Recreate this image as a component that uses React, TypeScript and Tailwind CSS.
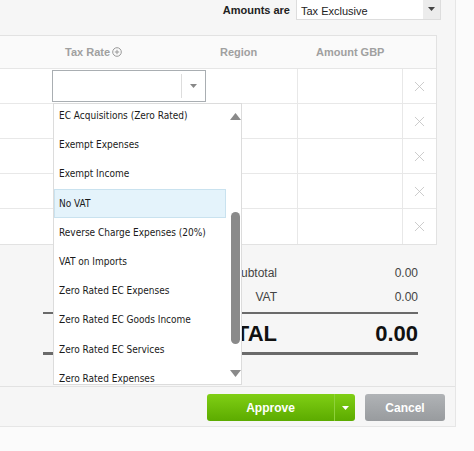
import { X } from 'lucide-react';

const items = [
  'EC Acquisitions (Zero Rated)',
  'Exempt Expenses',
  'Exempt Income',
  'No VAT',
  'Reverse Charge Expenses (20%)',
  'VAT on Imports',
  'Zero Rated EC Expenses',
  'Zero Rated EC Goods Income',
  'Zero Rated EC Services',
  'Zero Rated Expenses',
];

function Caret({ className }: { className?: string }) {
  return (
    <svg width="7" height="4" viewBox="0 0 7 4" className={className}>
      <path d="M0 0h7L3.5 4z" fill="currentColor" />
    </svg>
  );
}

export default function App() {
  return (
    <div className="relative w-[474px] h-[451px] overflow-hidden bg-[#fbfbfb] font-['Liberation_Sans',Arial,sans-serif] text-[#333]">
      <div className="w-[456px] h-[427px] bg-[#f6f6f6] border-r border-b border-[#e6e6e6] flex flex-col">
        {/* Top: amounts are */}
        <div className="h-[35px] flex justify-end items-start pr-[14px]">
          <span className="text-[11px] font-bold text-[#222] mt-[2px] mr-[6px]">Amounts are</span>
          <div className="w-[145px] h-[22px] -mt-[2px] bg-white border border-[#ddd] flex">
            <span className="flex-1 text-[11px] pl-[4px] pt-[4px] text-[#222]">Tax Exclusive</span>
            <div className="w-[17px] bg-[#ececec] flex items-center justify-center text-[#444]">
              <Caret />
            </div>
          </div>
        </div>

        {/* Table */}
        <div className="w-[437px] bg-white border border-l-0 border-[#e2e2e2]">
          <div className="h-[33px] bg-[#fafafa] flex items-center text-[11px] font-bold text-[#a0a0a0] border-b border-[#e6e6e6]">
            <div className="w-[52px]" />
            <div className="w-[154px] pl-[13px] flex items-center gap-[2px]">
              Tax Rate
              <svg width="10" height="10" viewBox="0 0 10 10" className="text-[#999]">
                <circle cx="5" cy="5" r="4.3" fill="none" stroke="currentColor" strokeWidth="1" />
                <path d="M5 2.8v4.4M2.8 5h4.4" stroke="currentColor" strokeWidth="1" />
              </svg>
            </div>
            <div className="w-[91px] pl-[14px]">Region</div>
            <div className="w-[105px] pl-[19px]">Amount GBP</div>
          </div>
          {[0, 1, 2, 3, 4].map((r) => (
            <div key={r} className={`h-[35px] flex ${r < 4 ? 'border-b border-[#e8e8e8]' : ''}`}>
              <div className="w-[52px]" />
              <div className="w-[154px] py-[1px]">
                {r === 0 && (
                  <div className="h-full border border-[#a9aeb2] flex">
                    <div className="flex-1" />
                    <div className="w-[24px] my-[3px] border-l border-[#ddd] flex items-center justify-center text-[#888]">
                      <Caret />
                    </div>
                  </div>
                )}
              </div>
              <div className="w-[91px]" />
              <div className="w-[105px] border-l border-[#e8e8e8]" />
              <div className="w-[34px] border-l border-[#e8e8e8] flex items-center justify-center text-[#bdbdbd]">
                <X size={17} strokeWidth={1.1} />
              </div>
            </div>
          ))}
        </div>

        {/* Totals */}
        <div className="h-[141px] pl-[43px] pt-[16px] text-[12px]">
          <div className="w-[375px] flex flex-col">
            <div className="flex h-[24px] items-center">
              <span className="w-[234px] text-right text-[#444]">Subtotal</span>
              <span className="flex-1 text-right text-[#444]">0.00</span>
            </div>
            <div className="flex h-[24px] items-center">
              <span className="w-[234px] text-right text-[#444]">VAT</span>
              <span className="flex-1 text-right text-[#444]">0.00</span>
            </div>
            <div className="h-[2px] bg-[#6a6a6a] mt-[3px]" />
            <div className="flex h-[38px] items-center text-[22px] font-bold text-[#111]">
              <span className="w-[234px] text-right">TOTAL</span>
              <span className="flex-1 text-right">0.00</span>
            </div>
            <div className="h-[3px] bg-[#6a6a6a]" />
          </div>
        </div>

        {/* Footer */}
        <div className="flex-1 border-t border-[#e2e2e2] flex justify-end items-start pt-[7px] pr-[10px] gap-[10px]">
          <div className="w-[148px] h-[27px] rounded-[3px] bg-gradient-to-b from-[#80cf14] to-[#5cab00] flex text-white text-[12px] font-bold">
            <span className="flex-1 flex items-center justify-center">Approve</span>
            <span className="w-[21px] border-l border-[#8ed13a] flex items-center justify-center">
              <Caret />
            </span>
          </div>
          <div className="w-[80px] h-[27px] rounded-[3px] bg-gradient-to-b from-[#b0b3b6] to-[#989b9e] flex items-center justify-center text-white text-[12px] font-bold">
            Cancel
          </div>
        </div>
      </div>

      {/* Tax rate dropdown list */}
      <div className="absolute left-[53px] top-[103px] w-[189px] h-[282px] bg-white border border-[#dcdcdc] overflow-hidden flex">
        <div className="w-[172px] -mt-[3px]">
          {items.map((it) => (
            <div
              key={it}
              className={`h-[29.2px] flex items-center pl-[4px] text-[10px] font-['DejaVu_Sans_Condensed','Liberation_Sans',sans-serif] text-[#1a1a1a] ${it === 'No VAT' ? 'bg-[#e4f3fb] border border-[#c9e2ef]' : 'border border-transparent'}`}
            >
              {it}
            </div>
          ))}
        </div>
        <div className="flex-1 relative">
          <svg width="11" height="7" viewBox="0 0 11 7" className="absolute left-[4px] top-[9px] text-[#8a8a8a]">
            <path d="M0 7L5.5 0L11 7z" fill="currentColor" />
          </svg>
          <div className="absolute left-[5px] top-[108px] w-[9px] h-[132px] rounded-full bg-[#8a8a8a]" />
          <svg width="11" height="7" viewBox="0 0 11 7" className="absolute left-[4px] top-[266px] text-[#8a8a8a]">
            <path d="M0 0h11L5.5 7z" fill="currentColor" />
          </svg>
        </div>
      </div>
    </div>
  );
}
